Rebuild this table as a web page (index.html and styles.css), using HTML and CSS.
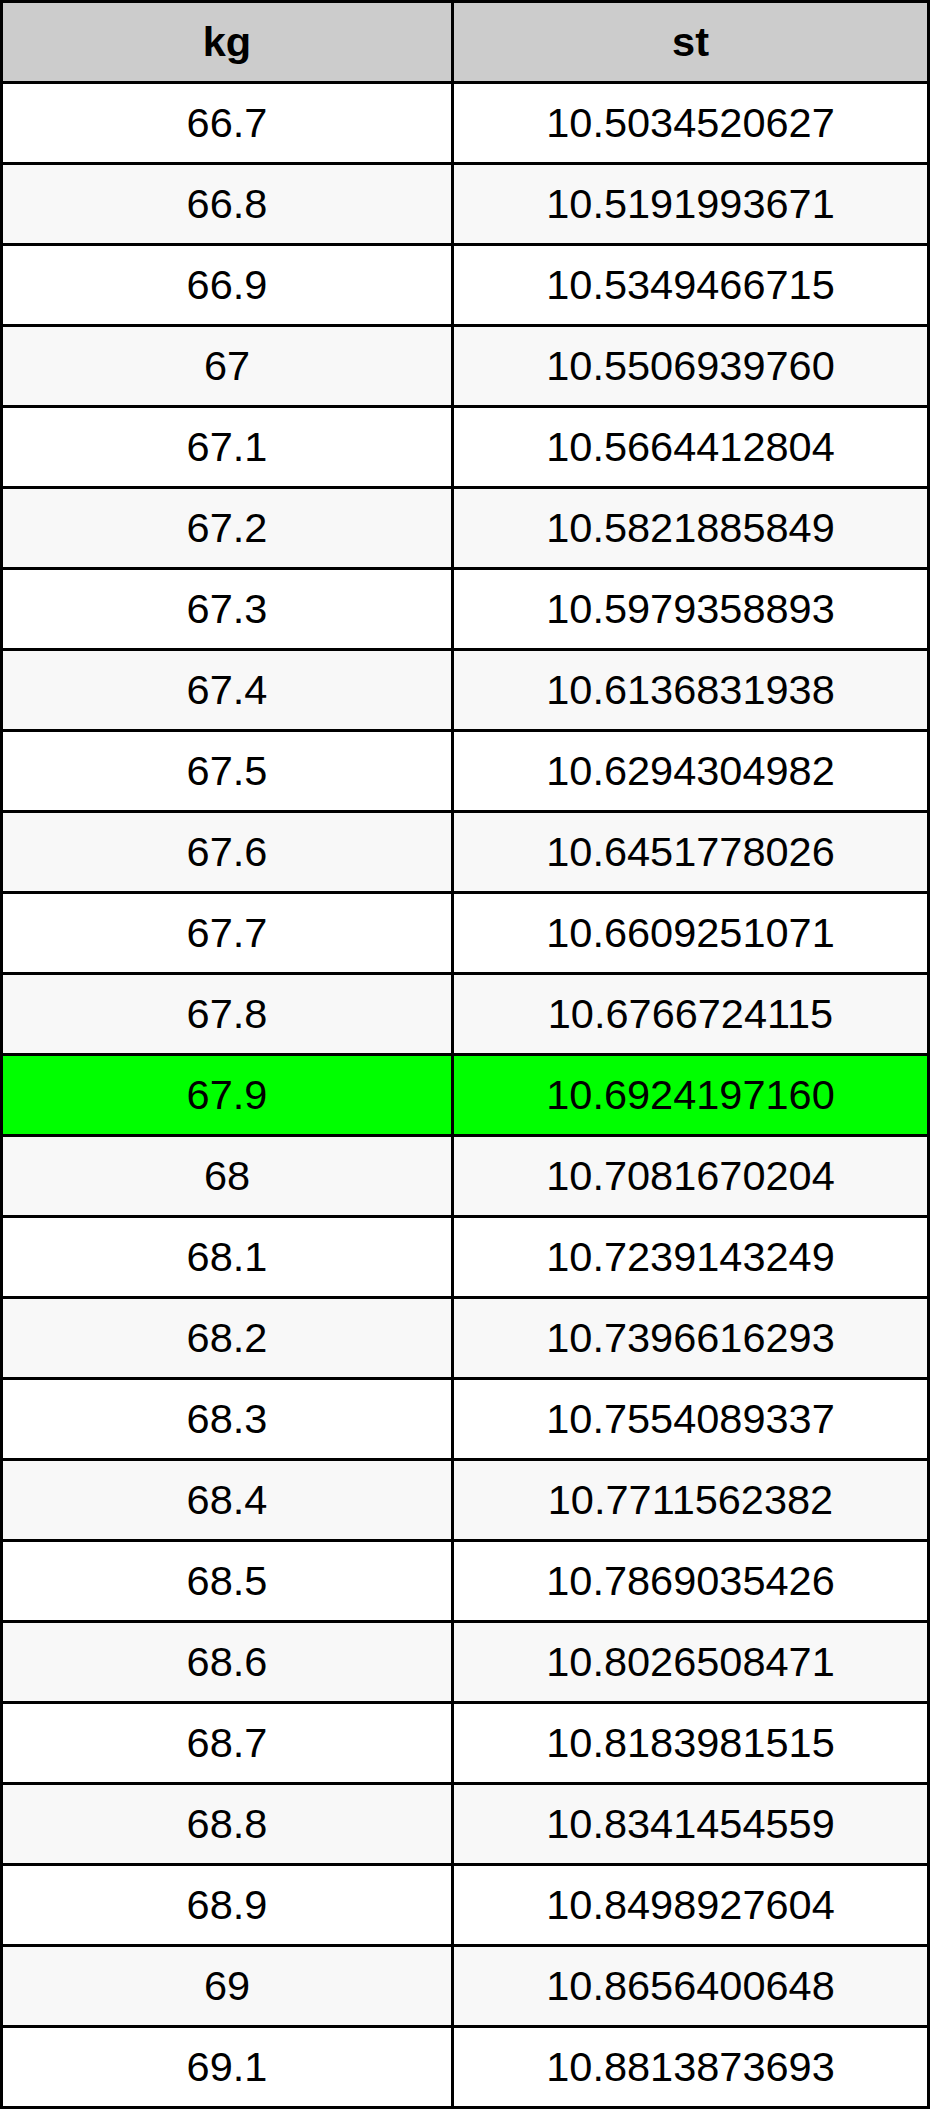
FILE: index.html
```html
<!DOCTYPE html>
<html>
<head>
<meta charset="utf-8">
<link rel="stylesheet" href="styles.css">
</head>
<body>
<table class="conv">
<colgroup><col class="c1"><col class="c2"></colgroup>
<thead>
<tr><th>kg</th><th>st</th></tr>
</thead>
<tbody>
<tr><td>66.7</td><td>10.5034520627</td></tr>
<tr class="alt"><td>66.8</td><td>10.5191993671</td></tr>
<tr><td>66.9</td><td>10.5349466715</td></tr>
<tr class="alt"><td>67</td><td>10.5506939760</td></tr>
<tr><td>67.1</td><td>10.5664412804</td></tr>
<tr class="alt"><td>67.2</td><td>10.5821885849</td></tr>
<tr><td>67.3</td><td>10.5979358893</td></tr>
<tr class="alt"><td>67.4</td><td>10.6136831938</td></tr>
<tr><td>67.5</td><td>10.6294304982</td></tr>
<tr class="alt"><td>67.6</td><td>10.6451778026</td></tr>
<tr><td>67.7</td><td>10.6609251071</td></tr>
<tr class="alt"><td>67.8</td><td>10.6766724115</td></tr>
<tr class="hl"><td>67.9</td><td>10.6924197160</td></tr>
<tr class="alt"><td>68</td><td>10.7081670204</td></tr>
<tr><td>68.1</td><td>10.7239143249</td></tr>
<tr class="alt"><td>68.2</td><td>10.7396616293</td></tr>
<tr><td>68.3</td><td>10.7554089337</td></tr>
<tr class="alt"><td>68.4</td><td>10.7711562382</td></tr>
<tr><td>68.5</td><td>10.7869035426</td></tr>
<tr class="alt"><td>68.6</td><td>10.8026508471</td></tr>
<tr><td>68.7</td><td>10.8183981515</td></tr>
<tr class="alt"><td>68.8</td><td>10.8341454559</td></tr>
<tr><td>68.9</td><td>10.8498927604</td></tr>
<tr class="alt"><td>69</td><td>10.8656400648</td></tr>
<tr><td>69.1</td><td>10.8813873693</td></tr>
</tbody>
</table>
</body>
</html>
```
FILE: styles.css
```css
html, body {
  margin: 0;
  padding: 0;
  background: #ffffff;
}
.conv {
  width: 930px;
  table-layout: fixed;
  border-collapse: separate;
  border-spacing: 3px;
  background: #000000;
  font-family: "Liberation Sans", Arial, sans-serif;
  font-size: 41.5px;
  color: #000000;
}
.c1 { width: 448px; }
.c2 { width: 473px; }
.conv th, .conv td {
  height: 78px;
  padding: 0;
  text-align: center;
  vertical-align: middle;
  background: #ffffff;
  line-height: 1;
}
.conv th {
  background: #cccccc;
  font-weight: bold;
}
.conv tr.alt td {
  background: #f8f8f8;
}
.conv tr.hl td {
  background: #00ff00;
}
```
